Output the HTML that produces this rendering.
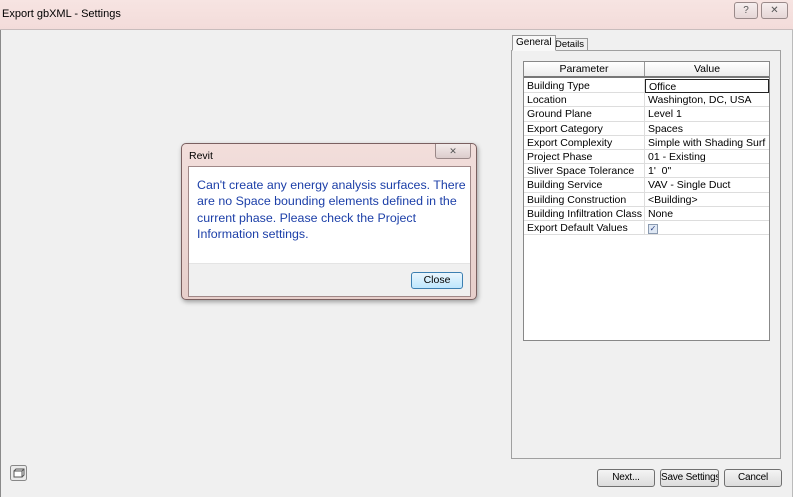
<!DOCTYPE html>
<html><head><meta charset="utf-8"><style>
*{box-sizing:border-box;margin:0;padding:0}
body{width:793px;height:497px;overflow:hidden;background:#f0f0f0;font-family:"Liberation Sans",sans-serif;font-size:11px;color:#000;position:relative}
.title{position:absolute;left:0;top:0;width:793px;height:30px;background:linear-gradient(#f7e4e2,#f3dcda);border-bottom:1px solid #c8bcbc}
.title span{position:absolute;left:2px;top:8px;font-size:11px}
.tb{position:absolute;top:2px;height:17px;border:1px solid #9a8a8a;border-radius:3px;background:linear-gradient(#f6eeee,#e6d6d6);font-size:10px;text-align:center;line-height:15px;color:#555}
.frame{position:absolute;left:0;top:30px;width:793px;height:467px;border-left:1px solid #8a8a8a;border-right:1px solid #bbb}
.tab{position:absolute;background:#f0f0f0;border:1px solid #999;border-bottom:none;font-size:10px;padding:0 3px;white-space:nowrap}
.panel{position:absolute;left:511px;top:50px;width:270px;height:409px;border:1px solid #a0a0a0;background:#f0f0f0}
.grid{position:absolute;left:523px;top:61px;width:247px;height:280px;border:1px solid #888;background:#fff}
.row{position:absolute;left:0;width:245px;height:14.2px;border-bottom:1px solid #ddd;font-size:10.5px;line-height:14px}
.row div{position:absolute;top:0;height:14px;white-space:nowrap;overflow:hidden}
.c1{left:0;width:121px;padding-left:3px;border-right:1px solid #ddd}
.c2{left:121px;width:124px;padding-left:3px}
.hdr{position:absolute;left:0;top:0;width:245px;height:16px;background:linear-gradient(#fff,#ececec);border-bottom:2px solid #777;font-size:10.5px;line-height:15px}
.hdr div{position:absolute;top:0;height:14px;text-align:center}
.btn{position:absolute;top:469px;height:18px;border:1px solid #707070;border-radius:3px;background:linear-gradient(#f4f4f4,#dcdcdc);font-size:10px;text-align:center;line-height:16px;white-space:nowrap;overflow:hidden;letter-spacing:-0.2px}
.dlg{position:absolute;left:181px;top:143px;width:296px;height:157px;border:1px solid #7a6060;border-radius:5px;background:linear-gradient(#f2dedb,#e8cfcb);box-shadow:1px 2px 5px rgba(0,0,0,.35)}
.dlg .inner{position:absolute;left:6px;top:22px;width:283px;height:131px;border:1px solid #a08888;background:#f0f0f0}
.dlg .white{position:absolute;left:0;top:0;width:281px;height:97px;background:#fff;border-bottom:1px solid #e4e4e4}
.msg{position:absolute;left:8px;top:10px;width:270px;color:#1c3fa8;font-size:12.4px;line-height:16.3px}
</style></head><body>
<div class="title"><span>Export gbXML - Settings</span>
<div class="tb" style="left:734px;width:24px">?</div>
<div class="tb" style="left:761px;width:27px">✕</div></div>
<div class="frame"></div>
<div class="panel"></div>
<div class="tab" style="left:512px;top:35px;height:16px;line-height:14px;background:#f8f8f8;z-index:2;border-bottom:1px solid #f8f8f8">General</div>
<div class="tab" style="left:551px;top:38px;height:12px;line-height:11px;font-size:9.5px">Details</div>
<div class="grid">
<div class="hdr"><div style="left:0;width:121px;border-right:1px solid #999">Parameter</div><div style="left:121px;width:124px">Value</div></div>
<div class="row" style="top:17px"><div class="c1">Building Type</div><div class="c2" style="border:1px solid #222;height:14px">Office</div></div>
<div class="row" style="top:31.2px"><div class="c1">Location</div><div class="c2">Washington, DC, USA</div></div>
<div class="row" style="top:45.4px"><div class="c1">Ground Plane</div><div class="c2">Level 1</div></div>
<div class="row" style="top:59.6px"><div class="c1">Export Category</div><div class="c2">Spaces</div></div>
<div class="row" style="top:73.8px"><div class="c1">Export Complexity</div><div class="c2">Simple with Shading Surf</div></div>
<div class="row" style="top:88px"><div class="c1">Project Phase</div><div class="c2">01 - Existing</div></div>
<div class="row" style="top:102.2px"><div class="c1">Sliver Space Tolerance</div><div class="c2">1'&nbsp; 0"</div></div>
<div class="row" style="top:116.4px"><div class="c1">Building Service</div><div class="c2">VAV - Single Duct</div></div>
<div class="row" style="top:130.6px"><div class="c1">Building Construction</div><div class="c2">&lt;Building&gt;</div></div>
<div class="row" style="top:144.8px"><div class="c1">Building Infiltration Class</div><div class="c2">None</div></div>
<div class="row" style="top:159px"><div class="c1">Export Default Values</div><div class="c2"><span style="display:inline-block;width:10px;height:10px;border:1px solid #8a9ab0;background:#dfe8f4;margin-top:2px;font-size:8px;line-height:8px;text-align:center;color:#2a3f80">✓</span></div></div>
</div>
<div class="btn" style="left:597px;width:58px">Next...</div>
<div class="btn" style="left:660px;width:59px">Save Settings</div>
<div class="btn" style="left:724px;width:58px">Cancel</div>
<svg style="position:absolute;left:10px;top:465px" width="18" height="17"><rect x="0.5" y="0.5" width="16" height="15" rx="2" fill="#eaeaea" stroke="#888"/><rect x="4" y="6" width="8" height="6" fill="#fff" stroke="#555"/><path d="M4 6 L6 4 H14 V10 L12 12 M12 6 L14 4" fill="none" stroke="#555"/></svg>
<div class="dlg">
<div style="position:absolute;left:7px;top:6px;font-size:10.5px">Revit</div>
<div style="position:absolute;left:253px;top:0;width:36px;height:15px;border:1px solid #9a8888;border-top:none;border-radius:0 0 3px 3px;background:linear-gradient(#f3ebea,#dccccc);text-align:center;font-size:9px;line-height:14px;color:#555">✕</div>
<div class="inner"><div class="white"><div class="msg">Can't create any energy analysis surfaces. There are no Space bounding elements defined in the current phase. Please check the Project Information settings.</div></div>
<div style="position:absolute;left:222px;top:105px;width:52px;height:17px;border:1px solid #3c7fb1;border-radius:3px;background:linear-gradient(#eaf6fd,#bee6fd);font-size:10.5px;text-align:center;line-height:15px">Close</div>
</div></div>
</body></html>
